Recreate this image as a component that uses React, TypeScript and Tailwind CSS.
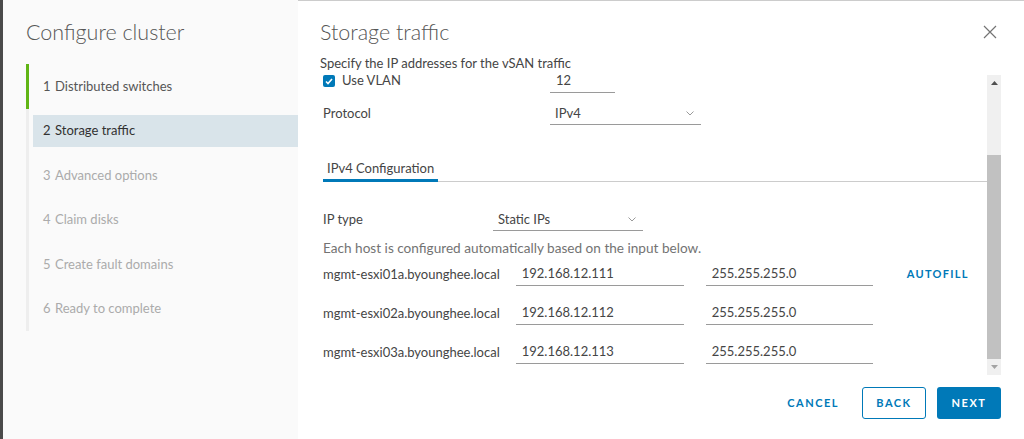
import React from "react"

const font = "font-['Lato','Open_Sans',sans-serif]"

const steps = [
  { n: 1, label: "Distributed switches", state: "done" },
  { n: 2, label: "Storage traffic", state: "current" },
  { n: 3, label: "Advanced options", state: "todo" },
  { n: 4, label: "Claim disks", state: "todo" },
  { n: 5, label: "Create fault domains", state: "todo" },
  { n: 6, label: "Ready to complete", state: "todo" },
]

const hosts = [
  { name: "mgmt-esxi01a.byounghee.local", ip: "192.168.12.111" },
  { name: "mgmt-esxi02a.byounghee.local", ip: "192.168.12.112" },
  { name: "mgmt-esxi03a.byounghee.local", ip: "192.168.12.113" },
]

function Chevron() {
  return (
    <svg width="8" height="5" viewBox="0 0 8 5" className="shrink-0">
      <polyline points="0.5,0.5 4,4 7.5,0.5" fill="none" stroke="#9a9a9a" strokeWidth="1" />
    </svg>
  )
}

function Select({ value, width }: { value: string; width: string }) {
  return (
    <div className={`${width} h-[22px] flex items-center justify-between pl-[5px] pr-[7px] border-b border-[#9a9a9a] text-[13px] text-[#454545]`}>
      <span>{value}</span>
      <Chevron />
    </div>
  )
}

function Field({ value, width }: { value: string; width: string }) {
  return (
    <div className={`${width} h-[23px] flex items-center pl-[6px] border-b border-[#9a9a9a] text-[13px] text-[#454545]`}>
      {value}
    </div>
  )
}

function Sidebar() {
  return (
    <div className="w-[295px] shrink-0 bg-[#fafafa] pl-[23px]">
      <h2 className="mt-[20px] h-[24px] leading-[24px] text-[21.5px] font-light text-[#565656]">Configure cluster</h2>
      <ul className="mt-[20px]">
        {steps.map((s) => (
          <li
            key={s.n}
            className={`h-[44.5px] flex items-center border-l-[3px] ${s.state === "done" ? "border-[#60b515]" : "border-[#eeeeee]"}`}
          >
            <div
              className={`ml-[4px] flex-1 h-[32px] flex items-center pl-[10px] text-[13px] ${
                s.state === "current"
                  ? "bg-[#d9e4ea] text-[#313131]"
                  : s.state === "done"
                    ? "text-[#565656]"
                    : "text-[#ababab]"
              }`}
            >
              <span className="w-[12px]">{s.n}</span>
              <span>{s.label}</span>
            </div>
          </li>
        ))}
      </ul>
    </div>
  )
}

function Scrollbar() {
  return (
    <div className="w-[14px] shrink-0 mt-[4px] mb-[2px] flex flex-col bg-[#f0f0f0]">
      <div className="h-[16px] flex items-center justify-center">
        <svg width="7" height="4" viewBox="0 0 7 4">
          <polygon points="0,4 3.5,0 7,4" fill="#505050" />
        </svg>
      </div>
      <div className="h-[64px]" />
      <div className="flex-1 bg-[#c1c1c1]" />
      <div className="h-[16px] flex items-center justify-center">
        <svg width="7" height="4" viewBox="0 0 7 4">
          <polygon points="0,0 3.5,4 7,0" fill="#a3a3a3" />
        </svg>
      </div>
    </div>
  )
}

export default function App() {
  return (
    <div className={`w-[1024px] h-[439px] flex overflow-hidden ${font}`}>
      <div className="w-[3px] shrink-0 bg-[#4a4a4a]" />
      <Sidebar />
      <div className="flex-1 flex flex-col bg-white border-t border-[#cccccc]">
        <div className="mt-[19px] h-[24px] flex items-center justify-between pl-[22px] pr-[27px]">
          <h2 className="text-[21.5px] leading-[24px] font-light text-[#565656]">Storage traffic</h2>
          <svg width="14" height="14" viewBox="0 0 14 14">
            <path d="M1 1 L13 13 M13 1 L1 13" stroke="#747474" strokeWidth="1.2" fill="none" />
          </svg>
        </div>
        <p className="mt-[11px] pl-[22px] text-[13px] leading-[16px] text-[#454545]">
          Specify the IP addresses for the vSAN traffic
        </p>

        <div className="h-[306px] flex pl-[22px] pr-[23px]">
          <div className="flex-1 pl-[3px]">
            <div className="flex items-center h-[22px] -mt-[1px]">
              <label className="w-[227px] flex items-center gap-[7px] text-[13px] text-[#454545]">
                <span className="w-[12px] h-[12px] rounded-[2px] bg-[#0079b8] flex items-center justify-center">
                  <svg width="8" height="7" viewBox="0 0 8 7">
                    <polyline points="1,3.5 3,5.5 7,1" fill="none" stroke="white" strokeWidth="1.6" />
                  </svg>
                </span>
                Use VLAN
              </label>
              <Field value="12" width="w-[65px]" />
            </div>

            <div className="flex items-center mt-[11px]">
              <span className="w-[227px] text-[13px] text-[#454545]">Protocol</span>
              <Select value="IPv4" width="w-[151px]" />
            </div>

            <div className="mt-[31px] flex border-b border-[#cccccc]">
              <div className="-mb-px px-[4px] pt-[4px] pb-[3px] border-b-[3px] border-[#0079b8] text-[13px] leading-[16px] text-[#454545]">
                IPv4 Configuration
              </div>
            </div>

            <div className="flex items-center mt-[27px]">
              <span className="w-[170px] text-[13px] text-[#454545]">IP type</span>
              <Select value="Static IPs" width="w-[150px]" />
            </div>

            <p className="mt-[9px] text-[13.6px] leading-[16px] text-[#737373]">
              Each host is configured automatically based on the input below.
            </p>

            <div className="mt-[7px] flex flex-col gap-[16px]">
              {hosts.map((h, i) => (
                <div key={h.name} className="flex items-center">
                  <span className="text-[13px] text-[#454545] whitespace-nowrap">{h.name}</span>
                  <div className="ml-[16px]">
                    <Field value={h.ip} width="w-[168px]" />
                  </div>
                  <div className="ml-[22px]">
                    <Field value="255.255.255.0" width="w-[167px]" />
                  </div>
                  {i === 0 && (
                    <button className="ml-[34px] text-[11px] font-bold tracking-[1.3px] text-[#0079b8]">AUTOFILL</button>
                  )}
                </div>
              ))}
            </div>
          </div>
          <Scrollbar />
        </div>

        <div className="mt-[10px] flex justify-end items-center gap-[11px] pr-[23px]">
          <button className="h-[32px] px-[12px] text-[11px] font-bold tracking-[1.5px] text-[#0079b8]">CANCEL</button>
          <button className="w-[64px] h-[32px] rounded-[3px] border border-[#0079b8] text-[11px] font-bold tracking-[1.5px] text-[#0079b8]">
            BACK
          </button>
          <button className="w-[64px] h-[32px] rounded-[3px] bg-[#0079b8] text-[11px] font-bold tracking-[1.5px] text-white">
            NEXT
          </button>
        </div>
      </div>
    </div>
  )
}
